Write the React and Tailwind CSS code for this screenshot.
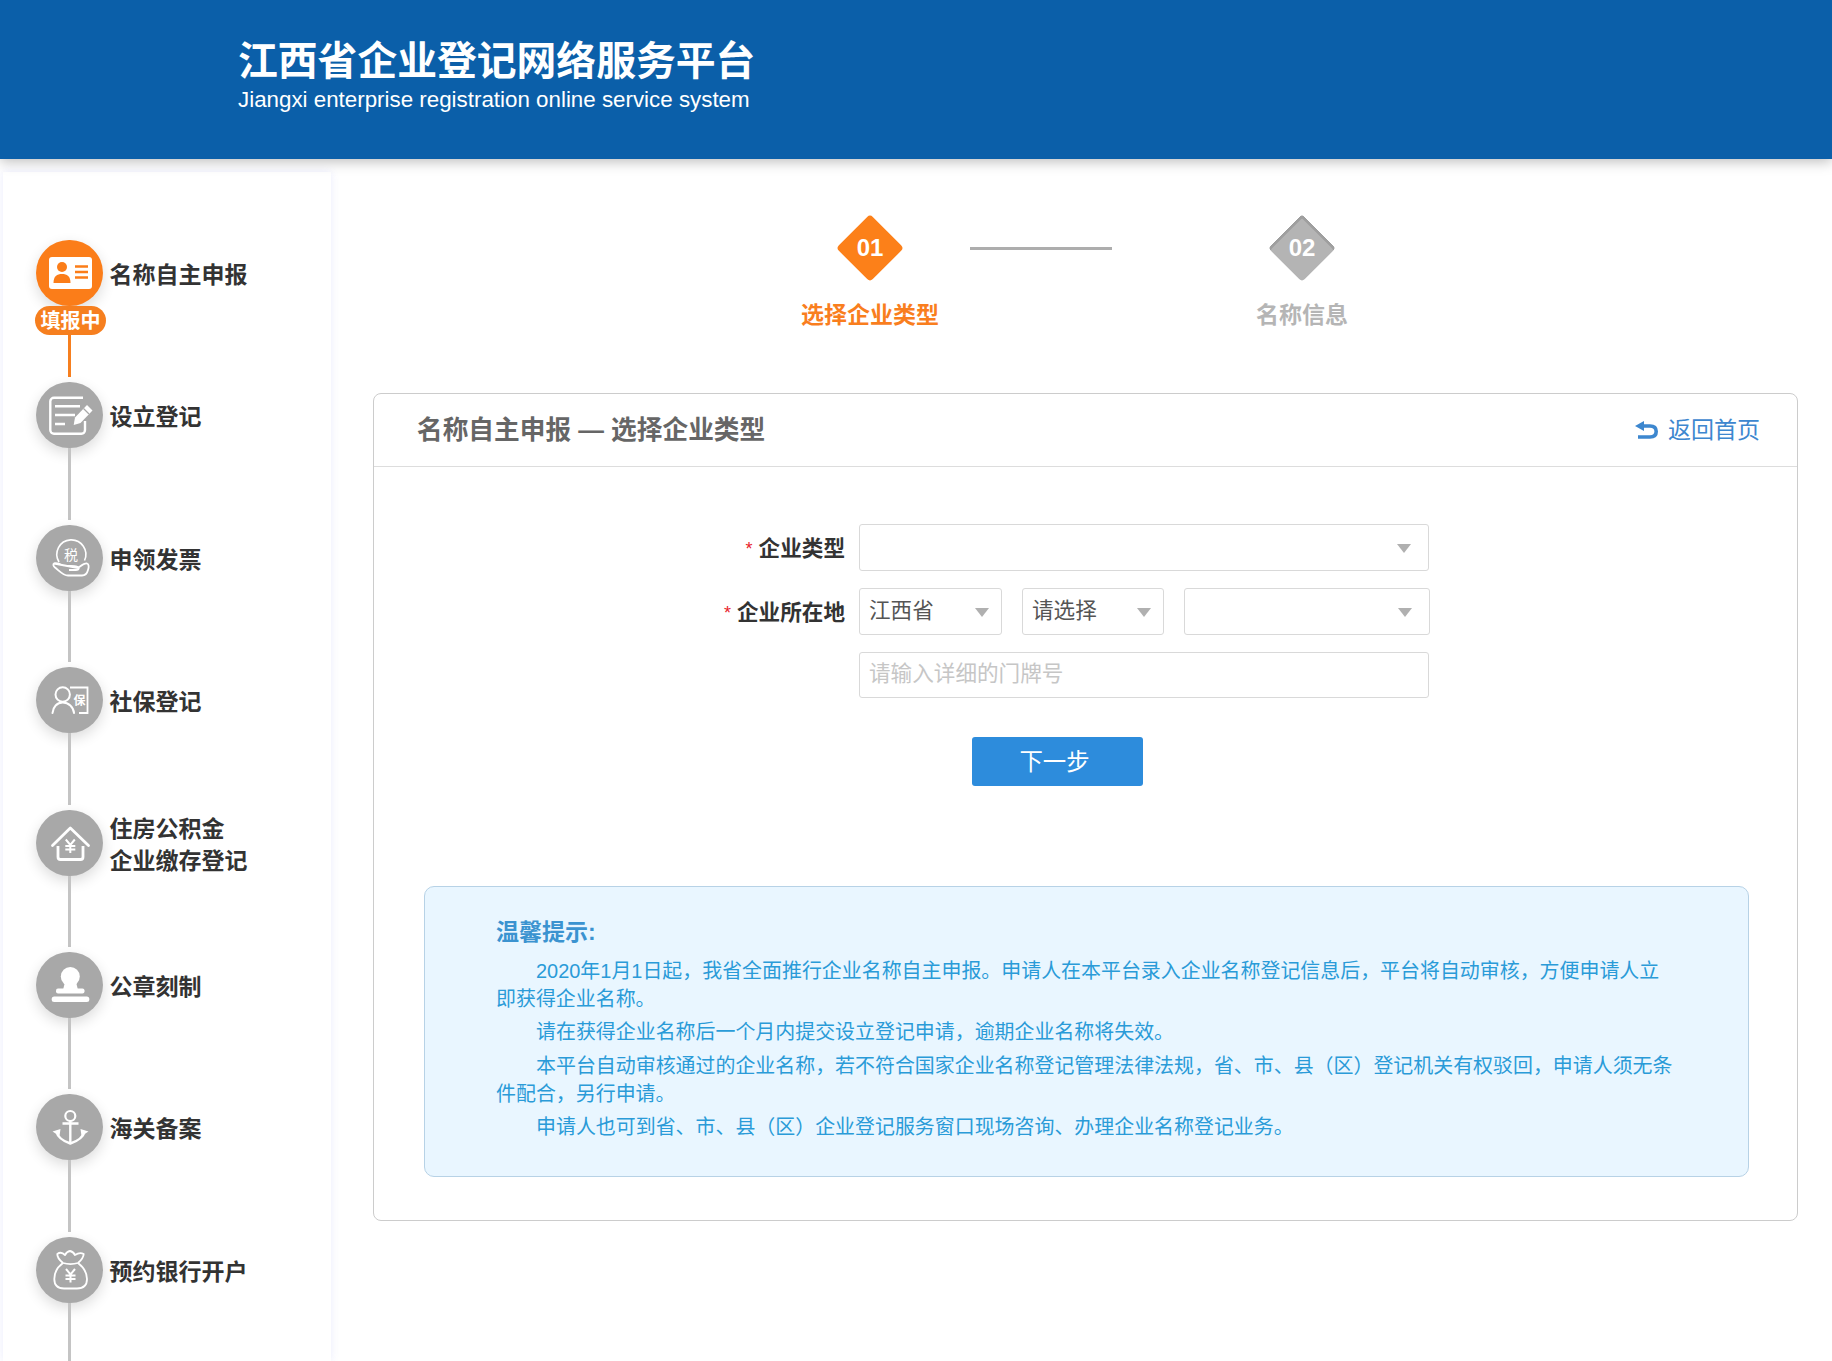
function Yen({ cx, cy, s = 1 }) {
  return (
    <path
      d={`M${cx - 4.5 * s} ${cy - 6.5 * s} L${cx} ${cy - 1 * s} L${cx + 4.5 * s} ${cy - 6.5 * s} M${cx} ${cy - 1 * s} V${cy + 7 * s} M${cx - 5 * s} ${cy} H${cx + 5 * s} M${cx - 5 * s} ${cy + 3.5 * s} H${cx + 5 * s}`}
      fill="none"
      stroke="#fff"
      strokeWidth="2"
    />
  )
}

const icons = {
  card: (
    <>
      <rect x="12" y="17" width="43" height="32" rx="3" fill="#fff" />
      <circle cx="25" cy="27" r="5" fill="#fb7d19" />
      <path d="M16.5 43 C16.5 36 20 34 25 34 C30 34 33.5 36 33.5 43 Z" fill="#fb7d19" />
      <path d="M38 26.5 H51 M38 32 H51 M38 37.5 H51" stroke="#fb7d19" strokeWidth="2.4" />
    </>
  ),
  form: (
    <>
      <path d="M46 15.7 H17 C15 15.7 13.3 17.3 13.3 19.3 V48 C13.3 50 15 51.7 17 51.7 H44.5 C46.5 51.7 48 50 48 48 V39" fill="none" stroke="#fff" strokeWidth="2.4" />
      <path d="M18 24.3 H43 M18 33 H38 M18 42 H28" stroke="#fff" strokeWidth="2.4" />
      <path d="M36.7 43 L38 35.5 L50 23 L55.5 28.5 L43.5 41 Z" fill="#fff" />
      <path d="M46.5 26.5 L52 32" stroke="#a8a8a8" strokeWidth="1.2" />
    </>
  ),
  tax: (
    <>
      <path d="M22 37 A14.5 14.5 0 1 1 47.5 35.5" fill="none" stroke="#fff" strokeWidth="1.6" />
      <text x="34" y="35" textAnchor="middle" fontSize="14" fill="#fff">税</text>
      <path d="M17 38.5 C20 37.5 23 39 26 40.5 C30 41.5 36 40 40 41.5 C43 42.5 42 45 39 45 H32 M41 43 C44 41 47 38 50 38.5 C52 39 52 42 51 45 C50 49 48 50.5 45 50.5 H31 C26 50.5 22 45.5 18 42.5 C16 41 16 39 17 38.5 Z" fill="none" stroke="#fff" strokeWidth="1.8" strokeLinejoin="round" />
    </>
  ),
  social: (
    <>
      <circle cx="25.7" cy="27.5" r="7.2" fill="none" stroke="#fff" strokeWidth="2" />
      <path d="M15.5 46 C16 40 20 35.5 25.7 35.5 C31.5 35.5 36.5 40 37 46" fill="none" stroke="#fff" strokeWidth="2" strokeLinecap="round" />
      <path d="M33 20.5 H50.5 V46 H42" fill="none" stroke="#fff" strokeWidth="1.8" />
      <text x="42.5" y="38" textAnchor="middle" fontSize="12" fontWeight="700" fill="#fff">保</text>
    </>
  ),
  house: (
    <>
      <path d="M15.5 35.5 L33.3 18 L51.5 35.5" fill="none" stroke="#fff" strokeWidth="2.8" strokeLinecap="round" strokeLinejoin="round" />
      <path d="M21 36 V47 C21 48.5 22 49.5 23.5 49.5 H43.5 C45 49.5 46 48.5 46 47 V36" fill="none" stroke="#fff" strokeWidth="2.8" />
      <Yen cx={33.3} cy={36} />
    </>
  ),
  stamp: (
    <>
      <circle cx="33.3" cy="24.5" r="9.5" fill="#fff" />
      <path d="M28 30 H39 L41 38 H26 Z" fill="#fff" />
      <rect x="19" y="36.5" width="28.5" height="5" rx="2" fill="#fff" />
      <rect x="14.7" y="44.5" width="37.6" height="5.5" rx="2.5" fill="#fff" />
    </>
  ),
  anchor: (
    <>
      <circle cx="33.3" cy="22" r="5" fill="none" stroke="#fff" strokeWidth="2.2" />
      <path d="M33.3 27 V50 M25.5 29.5 H41.5" fill="none" stroke="#fff" strokeWidth="2.4" />
      <path d="M19 37 C21 44 27 47.5 33.3 49.5 C39.5 47.5 46 44 48 37" fill="none" stroke="#fff" strokeWidth="2.4" />
      <path d="M15.5 37.5 L23.5 35 L22.5 42 Z M51.5 37.5 L43.5 35 L44.5 42 Z" fill="#fff" />
    </>
  ),
  bag: (
    <>
      <path d="M26 26 C19 31 17.3 37 17.3 42 C17.3 49 21 51.5 27 51.5 H40 C46 51.5 50 49 50 42 C50 37 47.5 31 41 26" fill="none" stroke="#fff" strokeWidth="1.8" />
      <path d="M26 26 C23 23.5 20 21 20.3 17 C23 15 26 16 28 18 C29.5 15 31 14.3 33 14 C35.5 14.5 37 16 38 18 C41 16 44 15.5 46.7 17 C46.5 21 44 23.5 41 26 C36 27.5 31 27.5 26 26 Z" fill="none" stroke="#fff" strokeWidth="1.8" strokeLinejoin="round" />
      <Yen cx={33.5} cy={38.5} />
    </>
  ),
}

const navItems = [
  { icon: 'card', label: ['名称自主申报'], active: true },
  { icon: 'form', label: ['设立登记'] },
  { icon: 'tax', label: ['申领发票'] },
  { icon: 'social', label: ['社保登记'] },
  { icon: 'house', label: ['住房公积金', '企业缴存登记'] },
  { icon: 'stamp', label: ['公章刻制'] },
  { icon: 'anchor', label: ['海关备案'] },
  { icon: 'bag', label: ['预约银行开户'] },
]

function NavItem({ item }) {
  return (
    <div className="flex h-[142.4px] shrink-0 pl-[33px]">
      <div className="flex w-[67px] shrink-0 flex-col items-center">
        <div className={`flex h-[66px] w-[67px] shrink-0 items-center justify-center rounded-full shadow-[0_5px_14px_rgba(0,0,0,0.14)] ${item.active ? 'bg-[#fb7d19]' : 'bg-[#a8a8a8]'}`}>
          <svg viewBox="0 0 66 66" className="h-[66px] w-[66px]">{icons[item.icon]}</svg>
        </div>
        {item.active && (
          <div className="ml-[2px] flex h-[29px] w-[71px] shrink-0 items-center justify-center rounded-full bg-[#f67f1f] text-[20px] leading-none font-bold text-white">
            填报中
          </div>
        )}
        <div className={`mb-[5px] w-[3px] flex-1 ${item.active ? 'bg-[#f67f1f]' : 'bg-[#c4c4c4]'}`}></div>
      </div>
      <div className="ml-[6.5px] flex h-[70px] flex-col justify-center text-[23px] leading-[32px] font-bold text-[#333]">
        {item.label.map(line => (
          <div key={line}>{line}</div>
        ))}
      </div>
    </div>
  )
}

function Diamond({ text, active }) {
  return (
    <div className="relative flex h-[66px] w-[66px] items-center justify-center">
      <div className={`absolute h-[48px] w-[48px] rotate-45 rounded-[4px] ${active ? 'bg-[#fc8019]' : 'border-t-[3px] border-l-[3px] border-[#9f9f9f] bg-[#b4b4b4]'}`}></div>
      <span className="relative text-[24px] font-bold text-white">{text}</span>
    </div>
  )
}

function Step({ num, label, active }) {
  return (
    <div className="flex w-[200px] flex-col items-center">
      <Diamond text={num} active={active} />
      <div className={`mt-[21px] h-[27px] text-[23px] leading-[27px] font-bold ${active ? 'text-[#f97e1e]' : 'text-[#b5b5b5]'}`}>{label}</div>
    </div>
  )
}

function Select({ className, value }) {
  return (
    <div className={`flex h-[47px] items-center justify-between rounded-[3px] border border-[#d9d9d9] pl-[9px] text-[21.6px] text-[#555] ${className}`}>
      <span className="-mt-[1px]">{value}</span>
      <span className="mt-[2px] h-0 w-0 border-x-[7px] border-t-[9px] border-x-transparent border-t-[#b0b0b0]"></span>
    </div>
  )
}

function Row({ label, className, children }) {
  return (
    <div className={`flex ${className}`}>
      <div className="flex w-[471px] shrink-0 items-center justify-end pt-[3px] text-[21.6px] font-bold text-[#333]">
        {label && <span className="mr-[6px] text-[18px] font-normal text-[#e8242c]">*</span>}
        {label}
      </div>
      <div className="ml-[14px] flex">{children}</div>
    </div>
  )
}

const tips = [
  '2020年1月1日起，我省全面推行企业名称自主申报。申请人在本平台录入企业名称登记信息后，平台将自动审核，方便申请人立即获得企业名称。',
  '请在获得企业名称后一个月内提交设立登记申请，逾期企业名称将失效。',
  '本平台自动审核通过的企业名称，若不符合国家企业名称登记管理法律法规，省、市、县（区）登记机关有权驳回，申请人须无条件配合，另行申请。',
  '申请人也可到省、市、县（区）企业登记服务窗口现场咨询、办理企业名称登记业务。',
]

export default function App() {
  return (
    <div className="flex h-[1361px] flex-col overflow-hidden bg-white font-['Liberation_Sans','Noto_Sans_CJK_SC',sans-serif]">
      {/* Header */}
      <header className="relative z-10 h-[159px] shrink-0 bg-[#0b5fa9] pt-[38px] pl-[238px] text-white shadow-[0_3px_12px_rgba(0,0,0,0.25)]">
        <h1 className="text-[39.8px] leading-[46px] font-bold">江西省企业登记网络服务平台</h1>
        <p className="mt-[3px] text-[22.35px] leading-[26px]">Jiangxi enterprise registration online service system</p>
      </header>

      <div className="flex min-h-0 flex-1 pt-[13px]">
        {/* Sidebar */}
        <aside className="ml-[3px] flex w-[328px] shrink-0 flex-col pt-[68px] shadow-[0_0_8px_rgba(110,120,240,0.14)]">
          {navItems.map(item => (
            <NavItem key={item.icon} item={item} />
          ))}
        </aside>

        {/* Main */}
        <main className="min-w-0 flex-1 pt-[43px]">
          <div className="ml-[439px] flex">
            <Step num="01" label="选择企业类型" active />
            <div className="mt-[31.5px] h-[3px] w-[142px] bg-[#adadad]"></div>
            <div className="ml-[90px]">
              <Step num="02" label="名称信息" />
            </div>
          </div>

          <section className="mt-[64px] mr-[34px] ml-[42px] h-[828px] rounded-[8px] border border-[#ccc]">
            <div className="flex h-[73px] items-center justify-between border-b border-[#ddd] pr-[37px] pl-[43px]">
              <h2 className="text-[25.7px] font-bold text-[#666]">名称自主申报 — 选择企业类型</h2>
              <a className="flex items-center text-[23px] text-[#3d87cf]">
                <svg viewBox="0 0 23 18" className="mr-[10px] h-[18px] w-[23px]">
                  <path d="M0 5 L9 0 V10 Z" fill="#3d87cf" />
                  <path d="M8 5 H15 C19.5 5 21.2 7.5 21.2 10.5 C21.2 14 19 16 15 16 H3" fill="none" stroke="#3d87cf" strokeWidth="3.6" />
                </svg>
                返回首页
              </a>
            </div>

            <div className="pt-[57px]">
              <Row label="企业类型">
                <Select className="w-[570px] pr-[17px]" />
              </Row>
              <Row label="企业所在地" className="mt-[17px]">
                <Select className="w-[143px] pr-[12px]" value="江西省" />
                <Select className="ml-[20px] w-[142px] pr-[12px]" value="请选择" />
                <Select className="ml-[20px] w-[246px] pr-[17px]" />
              </Row>
              <Row className="mt-[17px]">
                <input
                  placeholder="请输入详细的门牌号"
                  className="h-[46px] w-[570px] rounded-[3px] border border-[#d9d9d9] px-[9px] pb-[2px] text-[21.6px] placeholder:text-[#c6c6c6]"
                />
              </Row>
              <button className="mt-[39px] ml-[598px] block h-[49px] w-[171px] rounded-[3px] bg-[#2d8cdc] pt-[3px] pr-[6px] text-[23.4px] text-white">下一步</button>

              <div className="mt-[100px] mr-[48px] ml-[50px] h-[291px] rounded-[10px] border border-[#b7d2e6] bg-[#e9f6ff] pt-[30px] pr-[70px] pl-[71px]">
                <h3 className="text-[23px] leading-[30px] font-bold text-[#3b93d0]">温馨提示:</h3>
                <div className="mt-[9.5px] text-[19.95px] leading-[28px] text-[#2a9bd8]">
                  {tips.map(text => (
                    <p key={text} className="mt-[5.5px] indent-[40px]">{text}</p>
                  ))}
                </div>
              </div>
            </div>
          </section>
        </main>
      </div>
    </div>
  )
}
